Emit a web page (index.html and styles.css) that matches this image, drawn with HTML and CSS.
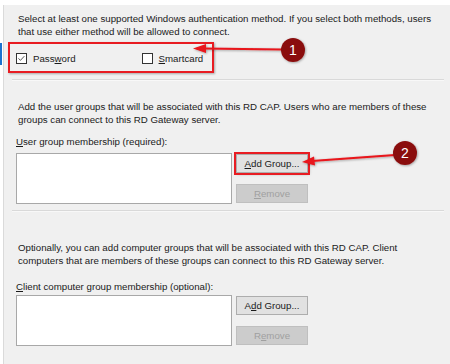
FILE: index.html
```html
<!DOCTYPE html>
<html>
<head>
<meta charset="utf-8">
<link rel="stylesheet" href="styles.css">
</head>
<body>
<div class="topband"></div>
<div class="frame">
  <div class="rail"><div class="rail-mark"></div></div>
  <div class="main">
    <section class="sec sec-auth">
      <p class="desc">Select at least one supported Windows authentication method. If you select both methods, users that use either method will be allowed to connect.</p>
      <div class="checks">
        <label class="check"><span class="box checked"><svg width="11" height="11" viewBox="0 0 11 11"><path d="M1.8 5.3 L4.2 7.8 L9 2.6" fill="none" stroke="#333" stroke-width="1"/></svg></span><span>Pass<u>w</u>ord</span></label>
        <label class="check check-smart"><span class="box"></span><span><u>S</u>martcard</span></label>
      </div>
    </section>
    <div class="divider"></div>
    <section class="sec sec-users">
      <p class="desc">Add the user groups that will be associated with this RD CAP. Users who are members of these groups can connect to this RD Gateway server.</p>
      <div class="label"><u>U</u>ser group membership (required):</div>
      <div class="group-row">
        <div class="listbox"></div>
        <div class="btns">
          <div class="btn btn-hl"><span><u>A</u>dd Group...</span></div>
          <div class="btn disabled"><span><u>R</u>emove</span></div>
        </div>
      </div>
    </section>
    <div class="divider"></div>
    <section class="sec sec-clients">
      <p class="desc">Optionally, you can add computer groups that will be associated with this RD CAP. Client computers that are members of these groups can connect to this RD Gateway server.</p>
      <div class="label"><u>C</u>lient computer group membership (optional):</div>
      <div class="group-row">
        <div class="listbox"></div>
        <div class="btns">
          <div class="btn"><span>A<u>d</u>d Group...</span></div>
          <div class="btn disabled"><span>R<u>e</u>move</span></div>
        </div>
      </div>
    </section>
  </div>
</div>

<svg class="annot" width="450" height="364" viewBox="0 0 450 364">
  <defs>
    <filter id="sh" x="-20%" y="-20%" width="140%" height="140%">
      <feDropShadow dx="0.8" dy="0.8" stdDeviation="0.8" flood-color="#000" flood-opacity="0.35"/>
    </filter>
  </defs>
  <g filter="url(#sh)">
    <line x1="282" y1="49.5" x2="204" y2="48.5" stroke="#e8141a" stroke-width="2"/>
    <polygon points="193,48.5 206,44 206,53" fill="#e8141a"/>
    <line x1="395" y1="155" x2="312" y2="161" stroke="#e8141a" stroke-width="2"/>
    <polygon points="302,162 314,156.5 315,165.5" fill="#e8141a"/>
  </g>
  <g filter="url(#sh)">
    <circle cx="293" cy="50" r="12" fill="#8a0b0b"/>
    <circle cx="405" cy="153" r="12" fill="#8a0b0b"/>
  </g>
  <text x="293" y="55" class="num">1</text>
  <text x="405" y="158" class="num">2</text>
</svg>
</body>
</html>
```

FILE: styles.css
```css
html, body {
  margin: 0;
  padding: 0;
}
body {
  width: 450px;
  height: 364px;
  overflow: hidden;
  background: #f0f0f0;
  font-family: "Liberation Sans", Arial, sans-serif;
  font-size: 9.7px;
  color: #1a1a1a;
  position: relative;
}
u { text-decoration: underline; text-underline-offset: 1px; }
.topband {
  height: 5px;
  background: #ffffff;
}
.frame {
  display: flex;
  height: 359px;
}
.rail {
  width: 3px;
  background: #ffffff;
  border-right: 1px solid #dadada;
  padding-top: 38px;
}
.rail-mark {
  width: 2px;
  height: 22px;
  background: #1a73d0;
}
.main {
  flex: 1;
  padding-left: 4px;
  padding-right: 6px;
}
.desc {
  margin: 0;
  padding-left: 10px;
  line-height: 13px;
}
.sec-auth { padding-top: 7px; }
.checks {
  margin-top: 4px;
  width: 196px;
  height: 25px;
  border: 2px solid #e81c22;
  box-shadow: 1px 1px 2px rgba(0,0,0,0.3);
  display: flex;
  align-items: center;
  padding-left: 6px;
  padding-top: 2px;
}
.check {
  display: flex;
  align-items: center;
  gap: 6px;
}
.check-smart { margin-left: 66px; }
.box {
  width: 11px;
  height: 11px;
  border: 1px solid #333;
  background: #fff;
  box-sizing: border-box;
  display: flex;
  align-items: center;
  justify-content: center;
}
.box svg { display: block; }
.divider {
  margin-top: 6px;
  height: 1px;
  background: #d9d9d9;
  border-bottom: 1px solid #f8f8f8;
  margin-left: 4px;
}
.sec-users { padding-top: 19px; }
.sec-clients { padding-top: 29px; }
.label {
  margin-top: 9px;
  padding-left: 8px;
  line-height: 13px;
}
.sec-clients .label { margin-top: 13px; }
.group-row {
  display: flex;
  margin-top: 5px;
  padding-left: 8px;
  gap: 4px;
}
.sec-clients .group-row { margin-top: 2px; }
.listbox {
  width: 214px;
  height: 49px;
  background: #ffffff;
  border: 1px solid #a8a8a8;
}
.btns {
  display: flex;
  flex-direction: column;
  gap: 11px;
  padding-top: 1px;
}
.btn {
  width: 70px;
  height: 17px;
  border: 1px solid #adadad;
  background: #e1e1e1;
  display: flex;
  align-items: center;
  justify-content: center;
  color: #1a1a1a;
}
.btn.disabled {
  background: #cccccc;
  border-color: #bfbfbf;
  color: #a0a0a0;
}
.btn-hl {
  outline: 2px solid #e81c22;
  outline-offset: 0px;
  box-shadow: 1px 1px 3px rgba(0,0,0,0.35);
}
.annot {
  position: absolute;
  left: 0;
  top: 0;
  pointer-events: none;
}
.num {
  fill: #ffffff;
  font-family: "Liberation Sans", Arial, sans-serif;
  font-size: 14px;
  text-anchor: middle;
}
```
